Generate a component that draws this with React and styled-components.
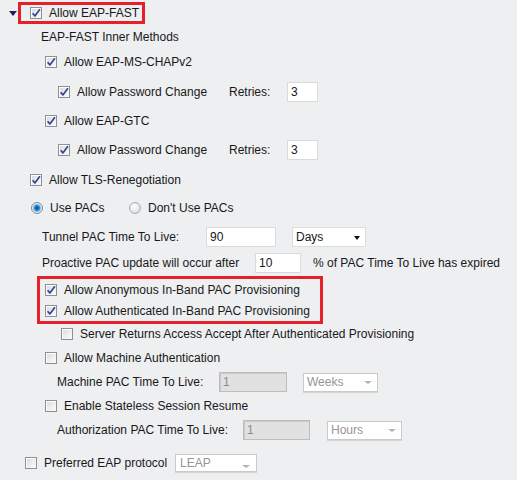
import React from "react";
import styled, { createGlobalStyle } from "styled-components";

const GlobalStyle = createGlobalStyle`
    html, body {
        margin: 0;
        padding: 0;
        background: #edeff1;
    }
    body {
        font-family: "Liberation Sans", Arial, sans-serif;
        font-size: 12px;
        color: #181818;
    }
`;

const Panel = styled.div`
    width: 517px;
    height: 480px;
    display: flex;
    flex-direction: column;
    overflow: hidden;
`;

const Row = styled.div`
    display: flex;
    align-items: center;
    flex-shrink: 0;
    height: ${(p) => p.$h}px;
    padding-left: ${(p) => p.$pl || 0}px;
    white-space: nowrap;
`;

const Caret = styled.span`
    width: 0;
    height: 0;
    margin: 1px 1px 0 9px;
    border-left: 4px solid transparent;
    border-right: 4px solid transparent;
    border-top: 5px solid #1c1f63;
`;

// red outline used to call out a setting in the screenshot
const Callout = styled.div`
    display: flex;
    flex-direction: ${(p) => (p.$column ? "column" : "row")};
    align-items: ${(p) => (p.$column ? "stretch" : "center")};
    box-sizing: border-box;
    border: 3px solid #e4212b;
    height: ${(p) => (p.$h ? `${p.$h}px` : "auto")};
    width: fit-content;
    margin: ${(p) => p.$margin || 0};
    padding: ${(p) => p.$pad || 0};
`;

const Box = styled.span`
    width: 12px;
    height: 12px;
    box-sizing: border-box;
    flex-shrink: 0;
    display: inline-flex;
    align-items: center;
    justify-content: center;
    border: 1px solid #8f9090;
    box-shadow: inset 1px 1px 0 #ffffff;
    background: linear-gradient(135deg, #d6d7d8 0%, #eeeeee 55%, #fbfbfb 100%);
`;

const Dot = styled.span`
    width: 12px;
    height: 12px;
    box-sizing: border-box;
    flex-shrink: 0;
    border-radius: 50%;
    border: 1px solid ${(p) => (p.$on ? "#7d8fa0" : "#a9abad")};
    background: ${(p) =>
        p.$on
            ? "radial-gradient(circle at 50% 50%, #0b4c84 0, #1d6fb2 1.6px, #4da0dc 3px, #bcdaf0 4px, #eef2f5 5px)"
            : "radial-gradient(circle at 40% 35%, #ffffff 0, #f0f0f0 35%, #cfd0d1 100%)"};
`;

const Label = styled.span`
    margin-left: ${(p) => (p.$ml !== undefined ? p.$ml : 7)}px;
    width: ${(p) => (p.$w ? `${p.$w}px` : "auto")};
    flex-shrink: 0;
`;

const Field = styled.div`
    box-sizing: border-box;
    width: ${(p) => p.$w}px;
    height: 20px;
    line-height: 18px;
    padding-left: 3px;
    flex-shrink: 0;
    background: ${(p) => (p.$disabled ? "#e1e1e1" : "#ffffff")};
    border: 1px solid ${(p) => (p.$disabled ? "#bdbdbd" : "#d9dadb")};
    box-shadow: ${(p) => (p.$disabled ? "inset 1px 1px 0 #cacaca" : "none")};
    color: ${(p) => (p.$disabled ? "#8b8b8b" : "#181818")};
`;

const Dropdown = styled.div`
    box-sizing: border-box;
    display: flex;
    align-items: ${(p) => (p.$top ? "flex-start" : "center")};
    justify-content: space-between;
    width: ${(p) => p.$w}px;
    height: ${(p) => p.$h || 20}px;
    margin-left: ${(p) => p.$ml || 0}px;
    padding: ${(p) => (p.$top ? "0 6px 0 4px" : "0 5px 0 3px")};
    flex-shrink: 0;
    background: #ffffff;
    border: 1px solid ${(p) => (p.$disabled ? "#c9cacb" : "#dcdddd")};
    box-shadow: ${(p) => (p.$disabled ? "0 1px 0 #d4d5d6" : "none")};
    color: ${(p) => (p.$disabled ? "#959595" : "#181818")};
    line-height: 16px;
`;

const Arrow = styled.span`
    width: 0;
    height: 0;
    align-self: center;
    margin-top: ${(p) => (p.$top ? "6px" : "1px")};
    border-left: ${(p) => (p.$disabled ? 4 : 3.5)}px solid transparent;
    border-right: ${(p) => (p.$disabled ? 4 : 3.5)}px solid transparent;
    border-top: ${(p) => (p.$disabled ? 3 : 4)}px solid ${(p) => (p.$disabled ? "#b3b3b3" : "#111111")};
`;

const Check = ({ checked }) => (
    <Box>
        {checked && (
            <svg width="10" height="10" viewBox="0 0 10 10">
                <path
                    d="M1.6 5.2 L3.9 7.9 L8.9 1.2"
                    fill="none"
                    stroke="#34449a"
                    strokeWidth="1.7"
                    strokeLinejoin="round"
                />
            </svg>
        )}
    </Box>
);

const CheckRow = ({ h, pl, checked, children }) => (
    <Row $h={h} $pl={pl}>
        <Check checked={checked} />
        <Label>{children}</Label>
    </Row>
);

const Select = ({ w, h, ml, disabled, top, children }) => (
    <Dropdown $w={w} $h={h} $ml={ml} $disabled={disabled} $top={top}>
        <span>{children}</span>
        <Arrow $disabled={disabled} $top={top} />
    </Dropdown>
);

const PasswordRow = () => (
    <Row $h={32} $pl={58}>
        <Check checked />
        <Label $w={152}>Allow Password Change</Label>
        <Label $ml={0} $w={58}>Retries:</Label>
        <Field $w={31}>3</Field>
    </Row>
);

const App = () => {
    return (
        <Panel>
            <GlobalStyle />
            <Row $h={26}>
                <Caret />
                <Callout $h={22} $pad="0 3px 0 9px">
                    <Check checked />
                    <Label>Allow EAP-FAST</Label>
                </Callout>
            </Row>
            <Row $h={22} $pl={41}>
                <Label $ml={0}>EAP-FAST Inner Methods</Label>
            </Row>
            <CheckRow h={28} pl={45} checked>Allow EAP-MS-CHAPv2</CheckRow>
            <PasswordRow />
            <CheckRow h={26} pl={45} checked>Allow EAP-GTC</CheckRow>
            <PasswordRow />
            <CheckRow h={28} pl={30} checked>Allow TLS-Renegotiation</CheckRow>
            <Row $h={28} $pl={31}>
                <Dot $on />
                <Label $w={79}>Use PACs</Label>
                <Dot />
                <Label>Don't Use PACs</Label>
            </Row>
            <Row $h={30} $pl={42}>
                <Label $ml={0} $w={164}>Tunnel PAC Time To Live:</Label>
                <Field $w={70}>90</Field>
                <Select w={74} ml={16}>Days</Select>
            </Row>
            <Row $h={22} $pl={42}>
                <Label $ml={0} $w={213}>Proactive PAC update will occur after</Label>
                <Field $w={46}>10</Field>
                <Label $ml={12}>% of PAC Time To Live has expired</Label>
            </Row>
            <Callout $column $margin="2px 0 0 37px" $pad="0 10px 0 5px">
                <CheckRow h={21} checked>Allow Anonymous In-Band PAC Provisioning</CheckRow>
                <CheckRow h={21} checked>Allow Authenticated In-Band PAC Provisioning</CheckRow>
            </Callout>
            <CheckRow h={20} pl={61}>Server Returns Access Accept After Authenticated Provisioning</CheckRow>
            <CheckRow h={28} pl={45}>Allow Machine Authentication</CheckRow>
            <Row $h={20} $pl={57}>
                <Label $ml={0} $w={162}>Machine PAC Time To Live:</Label>
                <Field $w={68} $disabled>1</Field>
                <Select w={75} h={19} ml={16} disabled>Weeks</Select>
            </Row>
            <CheckRow h={28} pl={45}>Enable Stateless Session Resume</CheckRow>
            <Row $h={20} $pl={57}>
                <Label $ml={0} $w={186}>Authorization PAC Time To Live:</Label>
                <Field $w={67} $disabled>1</Field>
                <Select w={75} h={19} ml={17} disabled>Hours</Select>
            </Row>
            <Row $h={46} $pl={25}>
                <Check />
                <Label $w={131}>Preferred EAP protocol</Label>
                <Select w={82} h={18} disabled top>LEAP</Select>
            </Row>
        </Panel>
    );
};

export default App;
